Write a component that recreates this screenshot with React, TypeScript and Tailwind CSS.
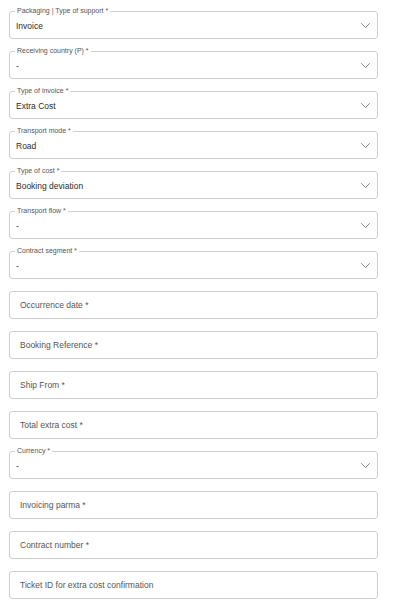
const fields: { label: string; value?: string; select?: boolean }[] = [
  { label: "Packaging | Type of support *", value: "Invoice", select: true },
  { label: "Receiving country (P) *", value: "-", select: true },
  { label: "Type of invoice *", value: "Extra Cost", select: true },
  { label: "Transport mode *", value: "Road", select: true },
  { label: "Type of cost *", value: "Booking deviation", select: true },
  { label: "Transport flow *", value: "-", select: true },
  { label: "Contract segment *", value: "-", select: true },
  { label: "Occurrence date *" },
  { label: "Booking Reference *" },
  { label: "Ship From *" },
  { label: "Total extra cost *" },
  { label: "Currency *", value: "-", select: true },
  { label: "Invoicing parma *" },
  { label: "Contract number *" },
  { label: "Ticket ID for extra cost confirmation" },
]

function Chevron() {
  return (
    <svg width="9" height="5" viewBox="0 0 9 5" fill="none" className="shrink-0">
      <path d="M0.5 0.5l4 4 4-4" stroke="#7a7a7a" strokeWidth="0.9" strokeLinecap="round" strokeLinejoin="round" />
    </svg>
  )
}

function SelectField({ label, value }: { label: string; value: string }) {
  return (
    <div className="relative h-[28px] rounded-[3px] border border-[#cfcfcf] pl-[6px] pr-[7px] flex items-center">
      <span className="absolute left-[5px] -top-[5px] bg-white px-[2px] text-[7px] leading-[8px] text-[#555]">{label}</span>
      <div className="flex-1 text-[8.5px] text-[#2b2b2b] pt-[2px]">{value}</div>
      <Chevron />
    </div>
  )
}

function TextField({ label }: { label: string }) {
  return (
    <div className="h-[28px] rounded-[3px] border border-[#cfcfcf] px-[10px] flex items-center text-[8.5px] text-[#555]">
      {label}
    </div>
  )
}

export default function App() {
  return (
    <div className="min-h-[605px] bg-white pl-[9px] pr-[16px] pt-[11px] flex flex-col gap-[12px]" style={{ fontFamily: '"Liberation Sans", Arial, sans-serif' }}>
      {fields.map((f) =>
        f.select ? (
          <SelectField key={f.label} label={f.label} value={f.value ?? ""} />
        ) : (
          <TextField key={f.label} label={f.label} />
        )
      )}
    </div>
  )
}
